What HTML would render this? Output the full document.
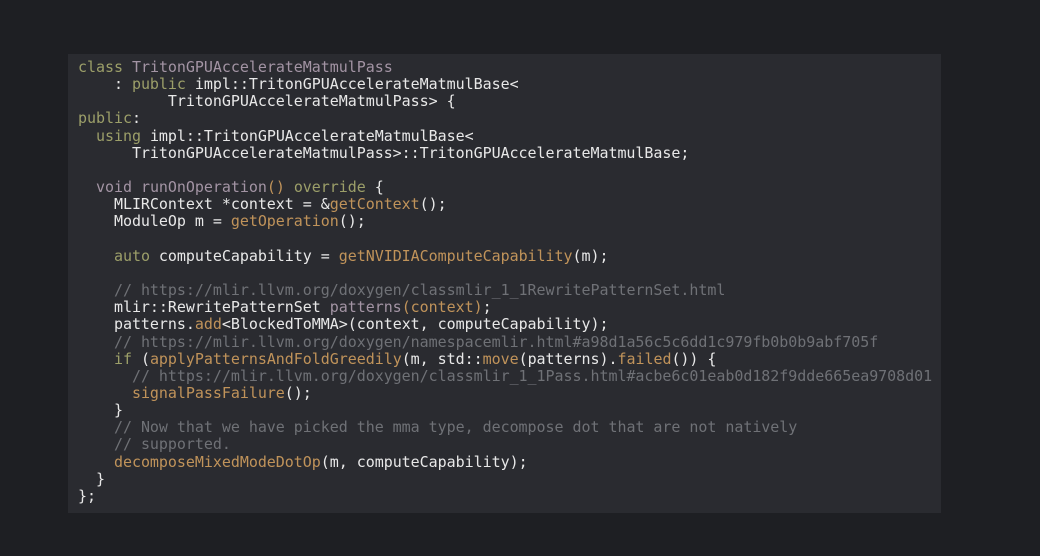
<!DOCTYPE html>
<html><head><style>
html,body{margin:0;padding:0;background:#1e1f23;width:1040px;height:556px;overflow:hidden}
.box{position:absolute;left:68px;top:54px;width:873px;height:459px;background:#2a2b30}
pre{position:absolute;left:78px;top:59px;margin:0;font-family:"DejaVu Sans Mono","Liberation Mono",monospace;font-size:15px;letter-spacing:-0.04px;line-height:17.15px;color:#e8e8e8;white-space:pre}
.k{color:#9c9f69}.c{color:#a394a4}.f{color:#c0935a}.m{color:#6f7176}
</style></head><body>
<div class="box"></div>
<pre><span class="k">class</span> <span class="c">TritonGPUAccelerateMatmulPass</span>
    : <span class="k">public</span> impl::TritonGPUAccelerateMatmulBase&lt;
          TritonGPUAccelerateMatmulPass&gt; {
<span class="k">public</span>:
  <span class="k">using</span> impl::TritonGPUAccelerateMatmulBase&lt;
      TritonGPUAccelerateMatmulPass&gt;::TritonGPUAccelerateMatmulBase;

  <span class="c">void</span> <span class="c">runOnOperation</span><span class="f">()</span> <span class="k">override</span> {
    MLIRContext *context = &amp;<span class="f">getContext</span>();
    ModuleOp m = <span class="f">getOperation</span>();

    <span class="k">auto</span> computeCapability = <span class="f">getNVIDIAComputeCapability</span>(m);

    <span class="m">// https://mlir.llvm.org/doxygen/classmlir_1_1RewritePatternSet.html</span>
    mlir::RewritePatternSet <span class="c">patterns</span><span class="f">(context)</span>;
    patterns.<span class="f">add</span>&lt;BlockedToMMA&gt;(context, computeCapability);
    <span class="m">// https://mlir.llvm.org/doxygen/namespacemlir.html#a98d1a56c5c6dd1c979fb0b0b9abf705f</span>
    <span class="k">if</span> (<span class="f">applyPatternsAndFoldGreedily</span>(m, std::<span class="f">move</span>(patterns).<span class="f">failed</span>()) {
      <span class="m">// https://mlir.llvm.org/doxygen/classmlir_1_1Pass.html#acbe6c01eab0d182f9dde665ea9708d01</span>
      <span class="f">signalPassFailure</span>();
    }
    <span class="m">// Now that we have picked the mma type, decompose dot that are not natively</span>
    <span class="m">// supported.</span>
    <span class="f">decomposeMixedModeDotOp</span>(m, computeCapability);
  }
};</pre>
</body></html>
